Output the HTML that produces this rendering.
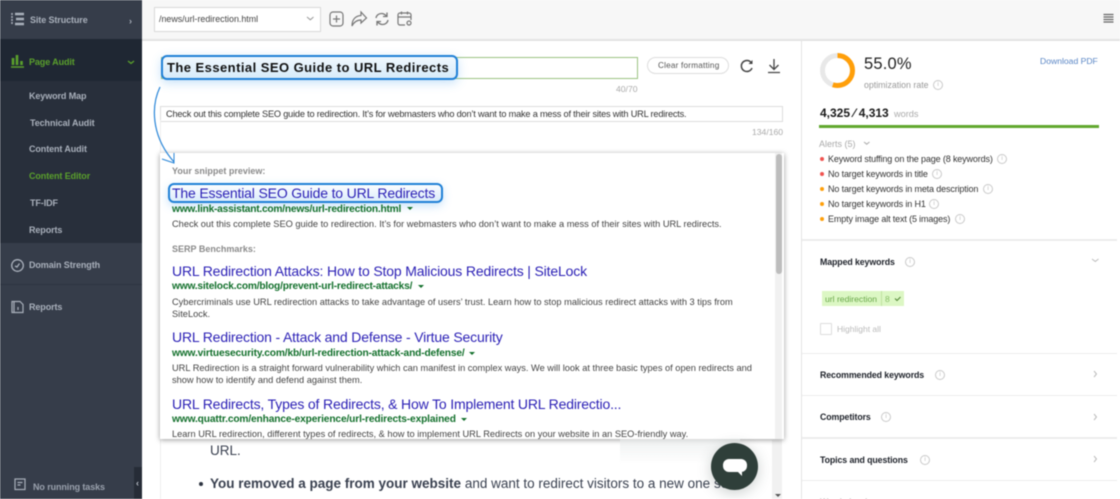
<!DOCTYPE html>
<html><head><meta charset="utf-8">
<style>
html,body{margin:0;padding:0;width:1120px;height:499px;overflow:hidden;background:#fff}
body{font-family:"Liberation Sans",sans-serif;position:relative}
#w{position:absolute;left:0;top:0;width:1120px;height:499px;overflow:hidden;filter:blur(.4px)}
.a{position:absolute;white-space:nowrap}
.box{position:absolute}
.nav{font-size:9px;font-weight:bold;color:#a9b0bb;letter-spacing:-.1px;line-height:12px}
.g{color:#5aa02c}
.t{font-size:14px;letter-spacing:-.16px;color:#2a1fb5;line-height:18px}
.u{font-size:10.2px;letter-spacing:-.2px;font-weight:bold;color:#13702c;line-height:12px}
.d{font-size:9.25px;color:#444;line-height:12px}
.h{font-size:9px;font-weight:bold;color:#8a8a8a;line-height:11px}
.al{font-size:9px;letter-spacing:-.14px;color:#333;line-height:12px}
.dot{position:absolute;width:4px;height:4px;border-radius:50%}
.sh{font-size:8.8px;letter-spacing:-.1px;font-weight:bold;color:#1d2129;line-height:12px}
.hr{position:absolute;left:802px;width:315px;height:1px;background:#ececec}
.i{position:absolute;width:8px;height:8px;border:1px solid #c9c9c9;border-radius:50%;color:#bbb;font-size:6px;line-height:8px;text-align:center}
</style></head><body><div id="w">

<!-- sidebar -->
<div class="box" style="left:0;top:0;width:142px;height:499px;background:#363d4a"></div>
<div class="box" style="left:0;top:39px;width:142px;height:42px;background:#1f2733"></div>
<div class="box" style="left:0;top:81px;width:142px;height:162px;background:#282f3b"></div>
<div class="box" style="left:0;top:284px;width:142px;height:1px;background:#2e3441"></div>
<svg class="box" style="left:10px;top:11px" width="16" height="16" fill="none"><path d="M2 2v12" stroke="#a9b0bb" stroke-width="1.5" stroke-dasharray="2 1"/><path d="M5 3h9M6 8h8M5 13h9" stroke="#a9b0bb" stroke-width="2.6"/></svg>
<div class="a nav" style="left:30px;top:14px">Site Structure</div>
<div class="a nav" style="left:129px;top:15px">›</div>
<svg class="box" style="left:10px;top:53px" width="16" height="16" fill="none" stroke="#5aa02c"><path d="M1 14h13" stroke-width="1.5"/><path d="M3 12V5M7 12V2M11.500 12V8" stroke-width="2.6"/></svg>
<div class="a nav g" style="left:29px;top:56px">Page Audit</div>
<svg class="box" style="left:127px;top:59px" width="8" height="6" fill="none"><path d="M1 2l3 2.400L7 2" stroke="#5aa02c" stroke-width="1.3"/></svg>
<div class="a nav" style="left:29px;top:90px">Keyword Map</div>
<div class="a nav" style="left:30px;top:117px">Technical Audit</div>
<div class="a nav" style="left:29px;top:143px">Content Audit</div>
<div class="a nav g" style="left:29px;top:170px">Content Editor</div>
<div class="a nav" style="left:30px;top:197px">TF-IDF</div>
<div class="a nav" style="left:29px;top:224px">Reports</div>
<svg class="box" style="left:10px;top:258px" width="15" height="15" fill="none" stroke="#a9b0bb" stroke-width="1.3"><circle cx="7.500" cy="7.500" r="5.800"/><path d="M5 8l2 1 2.500-3.500"/></svg>
<div class="a nav" style="left:29px;top:259px">Domain Strength</div>
<svg class="box" style="left:10px;top:299px" width="15" height="16" fill="none" stroke="#a9b0bb" stroke-width="1.2"><path d="M2 2.500h8l3 3v8H2z"/><path d="M4 2.500v11"/><path d="M8 11V8"/></svg>
<div class="a nav" style="left:29px;top:301px">Reports</div>
<svg class="box" style="left:14px;top:478px" width="12" height="13" fill="none" stroke="#a9b0bb" stroke-width="1.200"><rect x="1" y="1" width="10" height="10.500"/><path d="M3.500 4.500h5M3.500 7h3"/></svg>
<div class="a nav" style="left:33px;top:481px;color:#9aa1ad">No running tasks</div>
<div class="box" style="left:134px;top:467px;width:8px;height:32px;background:#262c37"></div>
<div class="a" style="left:136px;top:478px;font-size:9px;font-weight:bold;color:#b8bec8">‹</div>

<!-- toolbar -->
<div class="box" style="left:142px;top:0;width:978px;height:39px;background:#f7f7f7"></div>
<div class="box" style="left:142px;top:39px;width:978px;height:2px;background:#e3e3e3"></div>
<div class="box" style="left:154px;top:7px;width:165px;height:23px;background:#fff;border:1px solid #d9d9d9"></div>
<div class="a" style="left:159px;top:13px;font-size:8.900px;color:#444;line-height:12px">/news/url-redirection.html</div>
<svg class="box" style="left:306px;top:16px" width="9" height="6" fill="none"><path d="M1 1l3.300 2.800L7.500 1" stroke="#999"/></svg>
<svg class="box" style="left:328px;top:10px" width="17" height="18" fill="none" stroke="#777" stroke-width="1.2"><rect x="2" y="2" width="13" height="14" rx="3"/><path d="M8.500 5.500v7M5 9h7"/></svg>
<svg class="box" style="left:350px;top:10px" width="18" height="18" fill="none" stroke="#777" stroke-width="1.2"><path d="M11 2l5.500 6-5.500 5v-3C7 10 4 12 2 16c0-6 3-10 9-10.500z"/></svg>
<svg class="box" style="left:374px;top:11px" width="16" height="16" fill="none" stroke="#777" stroke-width="1.3"><path d="M2 7c.5-3 3-4.500 5.500-4.500 2 0 3.500 1 5 2.500M13 1.500V5.500H9M14 9c-.5 3-3 4.500-5.500 4.500-2 0-3.500-1-5-2.500M3 14.500V10.500H7"/></svg>
<svg class="box" style="left:396px;top:10px" width="17" height="18" fill="none" stroke="#777" stroke-width="1.2"><path d="M9 15H4a2 2 0 0 1-2-2V5a2 2 0 0 1 2-2h9a2 2 0 0 1 2 2v5M2 7h13M5.500 1.500v3M11.500 1.500v3"/><circle cx="13" cy="13" r="2"/></svg>
<svg class="box" style="left:1102px;top:13px" width="12" height="12"><path d="M1.500 1.500h10M1.500 4h10M1.500 6.500h10M1.500 9h10" stroke="#666" stroke-width="1.200"/></svg>

<!-- right divider -->
<div class="box" style="left:801px;top:41px;width:1px;height:458px;background:#e4e4e4"></div>

<!-- title row -->
<div class="box" style="left:161px;top:57px;width:475px;height:20px;border:1px solid #9cc482"></div>
<div class="box" style="left:161px;top:55px;width:293px;height:21px;border:2px solid #1f80d6;border-radius:6px;background:linear-gradient(#f0f8fe,#d7ebfa);box-shadow:0 3px 10px rgba(70,160,235,.3)"></div>
<div class="a" style="left:167px;top:60px;font-size:13px;font-weight:bold;color:#111;line-height:16px;letter-spacing:.45px">The Essential SEO Guide to URL Redirects</div>
<div class="box" style="left:647px;top:57px;width:80px;height:15px;border:1px solid #ddd;border-radius:9px;background:#fff"></div>
<div class="a" style="left:658px;top:60px;font-size:8.200px;color:#555;line-height:12px;letter-spacing:.2px">Clear formatting</div>
<svg class="box" style="left:739px;top:58px" width="16" height="16" fill="none" stroke="#444" stroke-width="1.500"><path d="M12.500 5A5.500 5.500 0 1 0 13 10"/><path d="M13.500 2v4h-4" fill="#444" stroke="none"/></svg>
<svg class="box" style="left:766px;top:58px" width="16" height="16" fill="none" stroke="#444" stroke-width="1.300"><path d="M8 1v10M3.500 7L8 11.500 12.500 7M2 14.500h12"/></svg>
<div class="a" style="left:616px;top:84px;font-size:8.600px;color:#aaa;line-height:11px">40/70</div>

<!-- description -->
<div class="box" style="left:160px;top:106px;width:621px;height:14px;border:1px solid #ddd"></div>
<div class="a" style="left:166px;top:108px;font-size:9.200px;letter-spacing:-.19px;color:#333;line-height:12px">Check out this complete SEO guide to redirection. It’s for webmasters who don’t want to make a mess of their sites with URL redirects.</div>
<div class="a" style="left:752px;top:127px;font-size:8.600px;color:#aaa;line-height:11px">134/160</div>

<!-- article behind -->
<div class="box" style="left:160px;top:120px;width:1px;height:379px;background:#eee"></div>
<div class="a" style="left:210px;top:442px;font-size:13.500px;color:#3a4150;line-height:18px">URL.</div>
<div class="box" style="left:199px;top:482px;width:4px;height:4px;border-radius:50%;background:#2d3340"></div>
<div class="a" style="left:210px;top:475px;font-size:13.500px;color:#3a4150;line-height:18px;width:530px;overflow:hidden"><b>You removed a page from your website</b> and want to redirect visitors to a new one so</div>
<div class="box" style="left:772px;top:440px;width:10px;height:59px;background:#f1f1f1"></div>
<div class="box" style="left:775px;top:494px;width:0;height:0;border-left:3px solid transparent;border-right:3px solid transparent;border-top:3px solid #555"></div>

<!-- preview -->
<div class="box" style="left:160px;top:153px;width:624px;height:286px;background:#fff;box-shadow:0 1px 5px rgba(0,0,0,.4);overflow:hidden">
<div class="box" style="right:2px;top:0;width:7px;height:286px;background:#f1f1f1"></div>
<div class="box" style="right:2px;top:1px;width:6px;height:120px;background:#bdbdbd;border-radius:3px"></div>
</div>
<div class="a h" style="left:172px;top:166px">Your snippet preview:</div>
<div class="box" style="left:168px;top:183px;width:271px;height:16px;border:2px solid #1f80d6;border-radius:6px;background:linear-gradient(#fafdff,#dcedfb);box-shadow:0 3px 9px rgba(70,160,235,.3)"></div>
<div class="a t" style="left:172px;top:184px">The Essential SEO Guide to URL Redirects</div>
<div class="a u" style="left:172px;top:204px;letter-spacing:-.22px">www.link-assistant.com/news/url-redirection.html</div>
<div class="box" style="left:407px;top:207px;border-left:3px solid transparent;border-right:3px solid transparent;border-top:3px solid #13702c"></div>
<div class="a d" style="left:172px;top:218px">Check out this complete SEO guide to redirection. It’s for webmasters who don’t want to make a mess of their sites with URL redirects.</div>
<div class="a h" style="left:172px;top:244px">SERP Benchmarks:</div>
<div class="a t" style="left:172px;top:262px">URL Redirection Attacks: How to Stop Malicious Redirects | SiteLock</div>
<div class="a u" style="left:172px;top:281px">www.sitelock.com/blog/prevent-url-redirect-attacks/</div>
<div class="box" style="left:418px;top:285px;border-left:3px solid transparent;border-right:3px solid transparent;border-top:3px solid #13702c"></div>
<div class="a d" style="left:172px;top:296px">Cybercriminals use URL redirection attacks to take advantage of users’ trust. Learn how to stop malicious redirect attacks with 3 tips from</div>
<div class="a d" style="left:172px;top:308px">SiteLock.</div>
<div class="a t" style="left:172px;top:328px">URL Redirection - Attack and Defense - Virtue Security</div>
<div class="a u" style="left:172px;top:348px;letter-spacing:-.15px">www.virtuesecurity.com/kb/url-redirection-attack-and-defense/</div>
<div class="box" style="left:469px;top:352px;border-left:3px solid transparent;border-right:3px solid transparent;border-top:3px solid #13702c"></div>
<div class="a d" style="left:172px;top:362px">URL Redirection is a straight forward vulnerability which can manifest in complex ways. We will look at three basic types of open redirects and</div>
<div class="a d" style="left:172px;top:374px">show how to identify and defend against them.</div>
<div class="a t" style="left:172px;top:395px">URL Redirects, Types of Redirects, &amp; How To Implement URL Redirectio...</div>
<div class="a u" style="left:172px;top:414px;letter-spacing:-.14px">www.quattr.com/enhance-experience/url-redirects-explained</div>
<div class="box" style="left:461px;top:418px;border-left:3px solid transparent;border-right:3px solid transparent;border-top:3px solid #13702c"></div>
<div class="a d" style="left:172px;top:428px">Learn URL redirection, different types of redirects, &amp; how to implement URL Redirects on your website in an SEO-friendly way.</div>

<!-- arrow -->
<svg class="box" style="left:148px;top:84px" width="40" height="84" fill="none" stroke="#2a86d8" stroke-width="1.200"><path d="M12 3C3 22 3 52 26 78"/><path d="M14 75l12 4 0-10" stroke-width="1"/></svg>

<!-- chat button -->
<div class="box" style="left:620px;top:439px;width:120px;height:25px;background:linear-gradient(#e9ecec,rgba(255,255,255,0));opacity:.7"></div>
<div class="box" style="left:711px;top:443px;width:47px;height:47px;border-radius:50%;background:#2f3f3a;box-shadow:0 3px 14px rgba(47,63,58,.25)"></div>
<div class="box" style="left:723px;top:459px;width:24px;height:13px;border-radius:6px;background:#fff"></div>
<div class="box" style="left:738px;top:472px;width:0;height:0;border-top:4px solid #fff;border-left:4px solid transparent"></div>

<!-- right panel -->
<svg class="box" style="left:819px;top:52px" width="37" height="37" fill="none" stroke-width="5"><circle cx="18.500" cy="18.500" r="15" stroke="#e8e8e8"/><circle cx="18.500" cy="18.500" r="15" stroke="#ff9f0a" stroke-dasharray="51.800 94.300" transform="rotate(-90 18.500 18.500)"/></svg>
<div class="a" style="left:864px;top:54px;font-size:16.500px;color:#222;line-height:20px;letter-spacing:.2px">55.0%</div>
<div class="a" style="left:864px;top:79px;font-size:8.800px;color:#999;line-height:12px">optimization rate</div>
<div class="i" style="left:933px;top:80px">i</div>
<div class="a" style="left:1040px;top:55px;font-size:8.600px;color:#5a86c5;line-height:12px">Download PDF</div>
<div class="a" style="left:820px;top:106px;font-size:12px;font-weight:bold;color:#1a1a1a;line-height:14px">4,325 ⁄ 4,313</div>
<div class="a" style="left:894px;top:108px;font-size:9.200px;color:#aaa;line-height:12px">words</div>
<div class="box" style="left:819px;top:125px;width:280px;height:3px;background:#62a82f"></div>
<div class="a" style="left:819px;top:138px;font-size:9px;color:#aaa;line-height:12px">Alerts (5)</div>
<svg class="box" style="left:863px;top:141px" width="8" height="5" fill="none"><path d="M1 1l2.700 2.200L6.500 1" stroke="#aaa"/></svg>
<div class="dot" style="left:820px;top:157px;background:#f0524f"></div>
<div class="a al" style="left:828px;top:153px">Keyword stuffing on the page (8 keywords)</div><div class="i" style="left:997px;top:154px">i</div>
<div class="dot" style="left:820px;top:172px;background:#f0524f"></div>
<div class="a al" style="left:828px;top:168px">No target keywords in title</div><div class="i" style="left:932px;top:169px">i</div>
<div class="dot" style="left:820px;top:187px;background:#ff9f0a"></div>
<div class="a al" style="left:828px;top:183px">No target keywords in meta description</div><div class="i" style="left:983px;top:184px">i</div>
<div class="dot" style="left:820px;top:202px;background:#ff9f0a"></div>
<div class="a al" style="left:828px;top:198px">No target keywords in H1</div><div class="i" style="left:929px;top:199px">i</div>
<div class="dot" style="left:820px;top:217px;background:#ff9f0a"></div>
<div class="a al" style="left:828px;top:213px">Empty image alt text (5 images)</div><div class="i" style="left:955px;top:214px">i</div>
<div class="hr" style="top:239px;height:2px"></div>

<div class="a sh" style="left:820px;top:256px">Mapped keywords</div><div class="i" style="left:905px;top:257px">i</div>
<svg class="box" style="left:1091px;top:258px" width="9" height="6" fill="none"><path d="M1 1l3.300 2.500L7.500 1" stroke="#bbb"/></svg>
<div class="box" style="left:822px;top:291px;width:82px;height:15px;background:#dcf7c4"></div>
<div class="a" style="left:825px;top:293px;font-size:8.600px;color:#6aa84a;line-height:12px">url redirection</div>
<div class="box" style="left:881px;top:291px;width:1px;height:15px;background:#bfe3a0"></div>
<div class="a" style="left:885px;top:293px;font-size:8.600px;color:#8bc06a;line-height:12px">8</div>
<svg class="box" style="left:894px;top:295px" width="8" height="7" fill="none"><path d="M1 3.500l2 2L6.500 2" stroke="#55883a" stroke-width="1.100"/></svg>
<div class="box" style="left:820px;top:323px;width:10px;height:10px;border:1px solid #ddd;border-radius:1px"></div>
<div class="a" style="left:837px;top:323px;font-size:8.500px;color:#bbb;line-height:12px">Highlight all</div>
<div class="hr" style="top:353px"></div>
<div class="a sh" style="left:820px;top:369px">Recommended keywords</div><div class="i" style="left:935px;top:370px">i</div>
<svg class="box" style="left:1093px;top:370px" width="5" height="8" fill="none"><path d="M1 1l2.500 3L1 7" stroke="#bbb"/></svg>
<div class="hr" style="top:395px"></div>
<div class="a sh" style="left:820px;top:411px">Competitors</div><div class="i" style="left:881px;top:412px">i</div>
<svg class="box" style="left:1093px;top:413px" width="5" height="8" fill="none"><path d="M1 1l2.500 3L1 7" stroke="#bbb"/></svg>
<div class="hr" style="top:437px;height:2px"></div>
<div class="a sh" style="left:820px;top:454px">Topics and questions</div><div class="i" style="left:920px;top:455px">i</div>
<svg class="box" style="left:1093px;top:455px" width="5" height="8" fill="none"><path d="M1 1l2.500 3L1 7" stroke="#bbb"/></svg>
<div class="hr" style="top:480px"></div>
<div class="a sh" style="left:820px;top:496px;color:#999">Word cloud</div>
</div></body></html>
